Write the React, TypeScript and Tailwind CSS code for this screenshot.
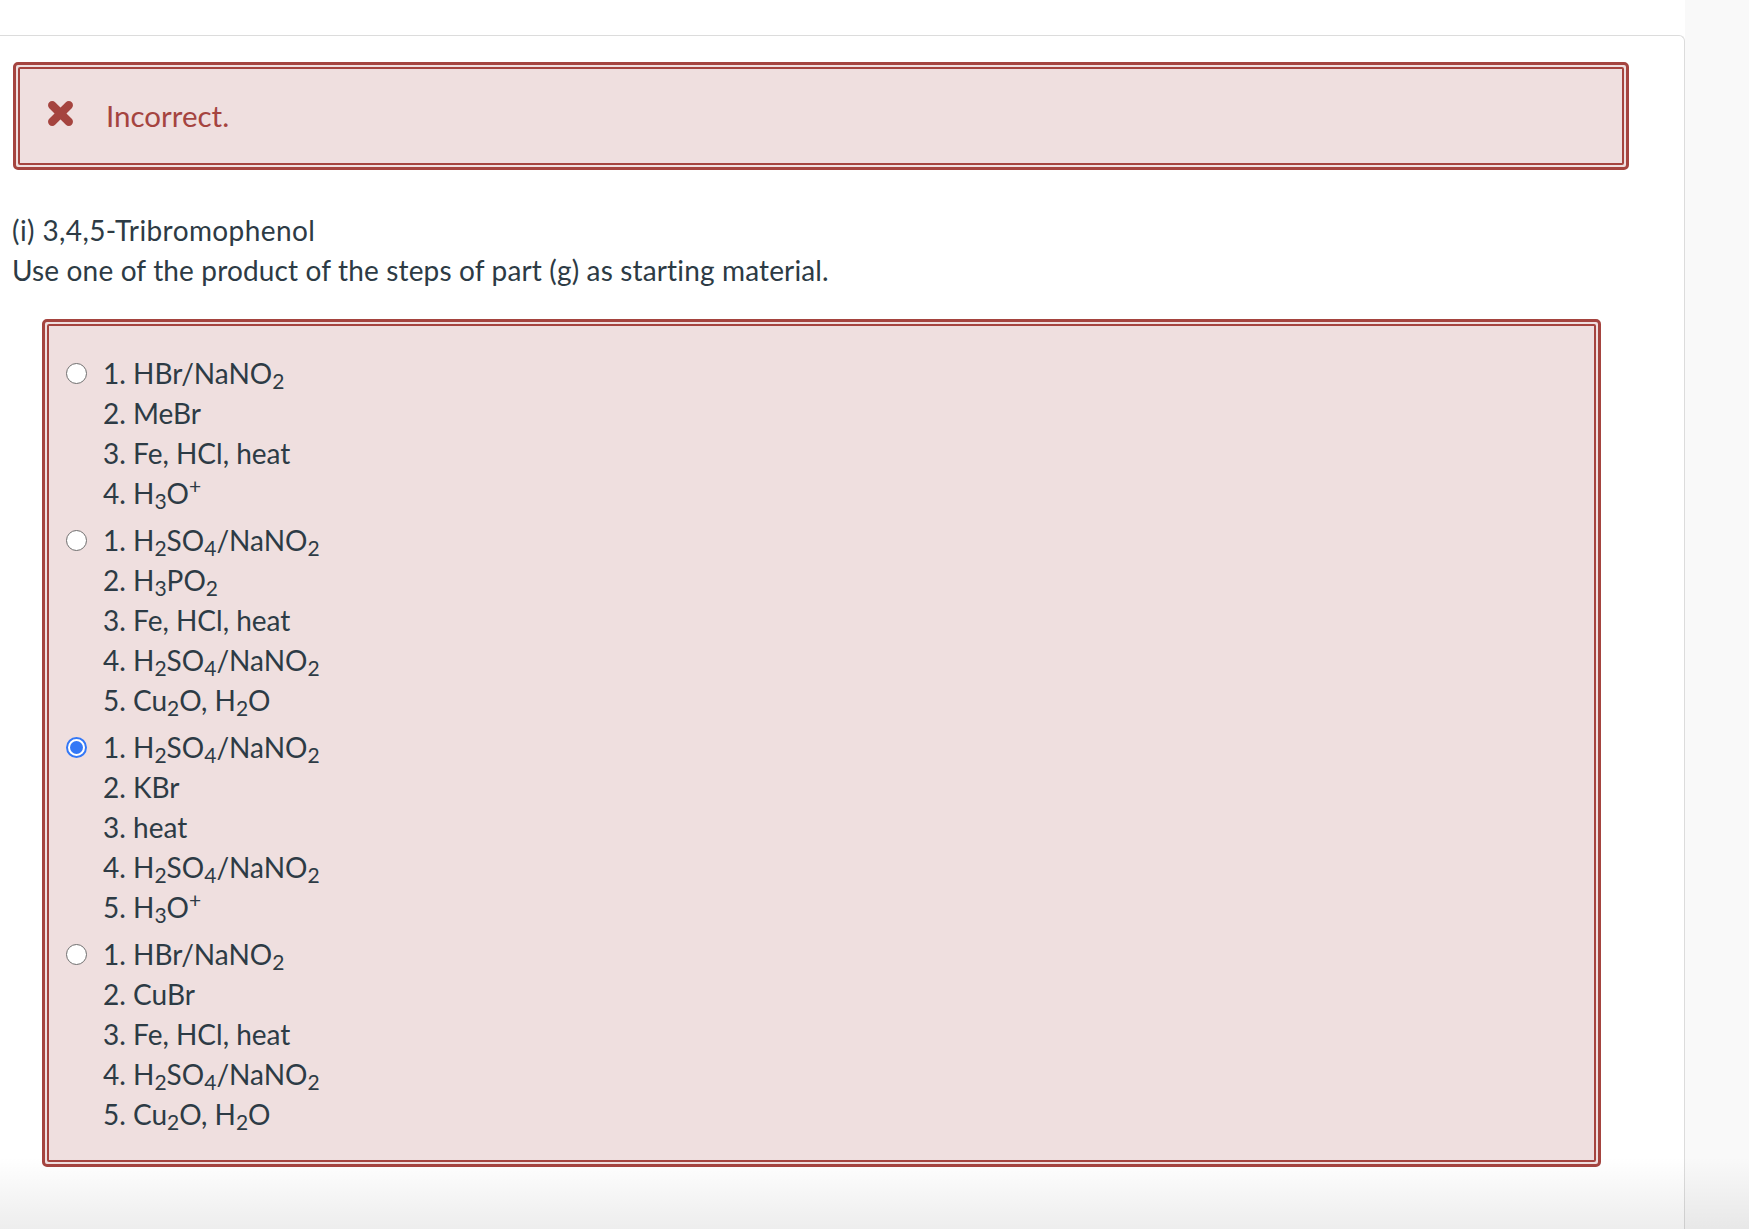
import React from 'react';

/**
 * Quiz question feedback: an "Incorrect." banner, the prompt,
 * and the four multiple-choice answers inside a red-framed box.
 */

type Option = { lines: React.ReactNode[]; checked?: boolean };

const options: Option[] = [
  {
    lines: [
      <>1. HBr/NaNO<sub>2</sub></>,
      <>2. MeBr</>,
      <>3. Fe, HCl, heat</>,
      <>4. H<sub>3</sub>O<sup>+</sup></>,
    ],
  },
  {
    lines: [
      <>1. H<sub>2</sub>SO<sub>4</sub>/NaNO<sub>2</sub></>,
      <>2. H<sub>3</sub>PO<sub>2</sub></>,
      <>3. Fe, HCl, heat</>,
      <>4. H<sub>2</sub>SO<sub>4</sub>/NaNO<sub>2</sub></>,
      <>5. Cu<sub>2</sub>O, H<sub>2</sub>O</>,
    ],
  },
  {
    checked: true,
    lines: [
      <>1. H<sub>2</sub>SO<sub>4</sub>/NaNO<sub>2</sub></>,
      <>2. KBr</>,
      <>3. heat</>,
      <>4. H<sub>2</sub>SO<sub>4</sub>/NaNO<sub>2</sub></>,
      <>5. H<sub>3</sub>O<sup>+</sup></>,
    ],
  },
  {
    lines: [
      <>1. HBr/NaNO<sub>2</sub></>,
      <>2. CuBr</>,
      <>3. Fe, HCl, heat</>,
      <>4. H<sub>2</sub>SO<sub>4</sub>/NaNO<sub>2</sub></>,
      <>5. Cu<sub>2</sub>O, H<sub>2</sub>O</>,
    ],
  },
];

function Radio({ checked }: { checked?: boolean }) {
  if (checked) {
    return (
      <span className="flex h-[21px] w-[21px] items-center justify-center rounded-full border-[2px] border-[#3478f6] bg-white">
        <span className="h-[13px] w-[13px] rounded-full bg-[#3478f6]" />
      </span>
    );
  }
  return <span className="block h-[21px] w-[21px] rounded-full border-[1.5px] border-[#6f6f6f] bg-white" />;
}

function AnswerRow({ lines, checked }: Option) {
  return (
    <div className="flex">
      <div className="flex h-[40px] w-[37px] shrink-0 items-center">
        <Radio checked={checked} />
      </div>
      <div>
        {lines.map((l, i) => (
          <div key={i} className="h-[40px] whitespace-nowrap">
            {l}
          </div>
        ))}
      </div>
    </div>
  );
}

export default function App() {
  return (
    <div className="relative flex min-h-screen bg-white font-['Lato','Liberation_Sans',sans-serif] text-[28px] leading-[40px] text-[#2d3b45]">
      <div className="w-[1685px] shrink-0 pt-[35px]">
        <div className="min-h-[1194px] rounded-tr-[6px] border-t border-r border-[#dcdcdc] pt-[26px]">
          {/* Feedback banner */}
          <div className="ml-[13px] w-[1616px] rounded-[5px] border-[3px] border-[#a5443f] bg-[#efdfdf] p-[2px]">
            <div className="flex h-[98px] items-center rounded-[2px] border-2 border-[#a5443f] pl-[27px]">
              <svg viewBox="0 0 26 26" className="h-[27px] w-[27px] -translate-y-[3px]">
                <path d="M5 5 L21 21 M21 5 L5 21" stroke="#a5443f" strokeWidth="8" strokeLinecap="round" />
              </svg>
              <span className="ml-[32px] text-[29.5px] text-[#a5443f]">Incorrect.</span>
            </div>
          </div>

          {/* Prompt */}
          <div className="mt-[40px] pl-[12px]">
            <p className="tracking-[0.4px]">(i) 3,4,5-Tribromophenol</p>
            <p className="tracking-[0.15px]">Use one of the product of the steps of part (g) as starting material.</p>
          </div>

          {/* Answers */}
          <div className="mt-[29px] ml-[42px] w-[1559px] rounded-[5px] border-[3px] border-[#a5443f] bg-[#efdfdf] p-[2px]">
            <div className="flex flex-col gap-[7px] rounded-[2px] border-2 border-[#a5443f] pt-[27px] pb-[26px] pl-[17px]">
              {options.map((o, i) => (
                <AnswerRow key={i} {...o} />
              ))}
            </div>
          </div>
        </div>
      </div>
      <div className="flex-1 bg-[#f9f9f9]" />

      {/* Bottom shading */}
      <div className="pointer-events-none absolute inset-x-0 bottom-0 h-[72px] bg-linear-to-b from-transparent to-black/[0.07]" />
    </div>
  );
}
